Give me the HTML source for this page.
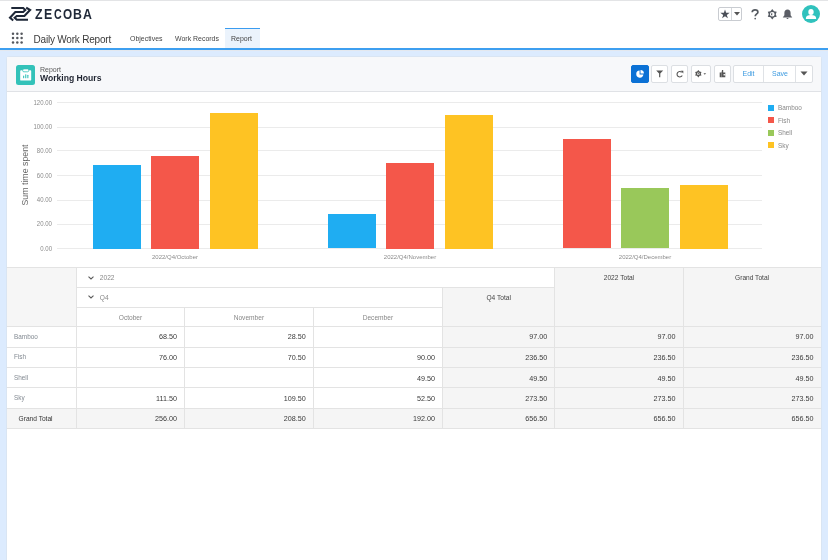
<!DOCTYPE html>
<html><head><meta charset="utf-8">
<style>
*{box-sizing:border-box;margin:0;padding:0}
html,body{width:828px;height:560px;overflow:hidden;background:#fff;font-family:"Liberation Sans",sans-serif}
.abs{position:absolute}
#topline{left:0;top:0;width:828px;height:1px;background:#e3e4e6}
.bl{top:6px;font-size:14px;font-weight:bold;color:#1f2838;transform:scaleX(0.88);transform-origin:0 0}
#apptitle{left:33.5px;top:34.2px;font-size:10px;letter-spacing:-0.2px;color:#3a3a3a}
.tab{top:34.4px;font-size:8px;color:#444;transform:scaleX(0.87);transform-origin:0 0}
#tabact{left:224.5px;top:28px;width:35px;height:20px;background:#ebf3fc;border-top:1.5px solid #3a9cf0}
#blueline{left:0;top:48px;width:828px;height:2px;background:#3d9ff0}
#bg{left:0;top:50px;width:828px;height:510px;background:#dcebfe}
#bgline{left:0;top:50px;width:828px;height:1px;background:#e4e8ee}
#card{left:6px;top:56px;width:815.5px;height:520px;background:#fff;border:1px solid #d9e5f3;border-radius:3px}
#cardhead{left:7px;top:57px;width:813.5px;height:35px;background:#f7f8fa;border-bottom:1px solid #e0e2e6}
#ricon{left:15.7px;top:65px;width:19.5px;height:20px;background:#33c2b9;border-radius:2.5px}
#rsmall{left:40px;top:66px;font-size:7px;color:#5a5a5a}
#rbig{left:40px;top:72.5px;font-size:8.6px;font-weight:bold;color:#1f2430}
.btn{top:65px;height:18px;border:1px solid #dcdfe3;border-radius:2px;background:#fff}
.ylab{font-size:6.5px;color:#8c8c8c;text-align:right;width:30px;margin-top:-0.3px;transform:scaleX(0.93);transform-origin:100% 0}
.grid{left:57px;width:705px;height:1px;background:#ebebeb}
.bar{position:absolute}
.xlab{font-size:6px;color:#8c8c8c;text-align:center;width:120px;margin-top:1.2px}
.leg{left:768px;width:6px;height:6px}
.legt{left:778px;font-size:6.4px;color:#888;margin-top:0.6px}
.cell{position:absolute;font-size:6.6px;color:#333}
</style></head><body><div id="root" style="position:absolute;left:0;top:0;width:828px;height:560px;will-change:transform">
<div id="topline" class="abs"></div>

<!-- logo -->
<svg class="abs" style="left:0;top:0" width="40" height="25" viewBox="0 0 40 25">
  <g fill="none" stroke="#1f2838" stroke-width="2.1" stroke-linejoin="miter" stroke-linecap="butt" stroke-miterlimit="10">
    <path d="M11.3 8 H23.2 L25.3 10 L23.2 12 H15.3 L10 17.7 L13.2 20.5"/>
    <path d="M26.2 7.7 L30.1 10 L24.4 16 H16.8 L14.7 17.8 L16.8 19.7 H28"/>
  </g>
</svg>
<div class="abs bl" style="left:35px">Z</div><div class="abs bl" style="left:44px">E</div><div class="abs bl" style="left:54px;transform:scaleX(0.76)">C</div><div class="abs bl" style="left:63px;transform:scaleX(0.84)">O</div><div class="abs bl" style="left:73px">B</div><div class="abs bl" style="left:83.4px">A</div>

<!-- top right icons -->
<div class="abs" style="left:718px;top:7px;width:24px;height:14px;border:1px solid #c9ccd1;border-radius:2px;background:#fff"></div>
<div class="abs" style="left:731px;top:8px;width:1px;height:12px;background:#d5d8dc"></div>
<svg class="abs" style="left:719.5px;top:9px" width="10" height="10" viewBox="0 0 24 24"><path fill="#4b4f58" d="M12 1l2.7 8.1h8.5l-6.9 5 2.7 8.1L12 17.2l-7 5 2.7-8.1-6.9-5h8.5z"/></svg>
<svg class="abs" style="left:733.5px;top:12px" width="6" height="4" viewBox="0 0 6 4"><path fill="#555" d="M0 0h6L3 3.5z"/></svg>
<svg class="abs" style="left:751px;top:9px" width="8" height="11" viewBox="0 0 8 11"><path fill="none" stroke="#555a60" stroke-width="1.7" d="M1.2 3.2C1.2 1.8 2.4 0.9 4 0.9S6.9 1.9 6.9 3.2C6.9 4.9 4.2 5 4.2 7.3"/><circle cx="4.2" cy="9.6" r="0.85" fill="#555a60"/></svg>
<svg class="abs" style="left:767px;top:9px" width="10.5" height="10.5" viewBox="0 0 24 24"><path fill="#555a62" fill-rule="evenodd" d="M12.00 0.20 L16.00 5.07 L22.22 6.10 L20.00 12.00 L22.22 17.90 L16.00 18.93 L12.00 23.80 L8.00 18.93 L1.78 17.90 L4.00 12.00 L1.78 6.10 L8.00 5.07Z M12 6.6A5.4 5.4 0 1 0 12 17.4A5.4 5.4 0 1 0 12 6.6Z"/><path fill="#555a62" d="M12 9.2A2.8 2.8 0 1 0 12 14.8z"/></svg>
<svg class="abs" style="left:782px;top:8.7px" width="11" height="11" viewBox="0 0 24 24"><path fill="#5b5e66" d="M12 1.2c-4.4 0-6.8 3.2-6.8 7.4v5.2L1.6 18.6h20.8l-3.6-4.8V8.6c0-4.2-2.4-7.4-6.8-7.4z"/><path fill="#5b5e66" d="M9.8 19.5h4.4a2.2 2.2 0 0 1-4.4 0z"/></svg>
<div class="abs" style="left:802px;top:5px;width:18px;height:18px;border-radius:50%;background:#30c2bd"></div>
<svg class="abs" style="left:802px;top:5px" width="18" height="18" viewBox="0 0 18 18"><ellipse cx="9" cy="7" rx="2.7" ry="3" fill="#fff"/><path d="M3.9 14.1V12.9C3.9 11.1 6 9.9 9 9.9S14.1 11.1 14.1 12.9V14.1Z" fill="#fff"/></svg>

<!-- nav -->
<svg class="abs" style="left:11px;top:32px" width="13" height="13" viewBox="0 0 13 13"><g fill="#55585e">
<circle cx="2" cy="1.7" r="1.25"/><circle cx="6.3" cy="1.7" r="1.25"/><circle cx="10.6" cy="1.7" r="1.25"/>
<circle cx="2" cy="6.1" r="1.25"/><circle cx="6.3" cy="6.1" r="1.25"/><circle cx="10.6" cy="6.1" r="1.25"/>
<circle cx="2" cy="10.5" r="1.25"/><circle cx="6.3" cy="10.5" r="1.25"/><circle cx="10.6" cy="10.5" r="1.25"/></g></svg>
<div id="apptitle" class="abs">Daily Work Report</div>
<div id="tabact" class="abs"></div>
<div class="abs tab" style="left:130px">Objectives</div>
<div class="abs tab" style="left:175px">Work Records</div>
<div class="abs tab" style="left:231px">Report</div>
<div id="bg" class="abs"></div>
<div id="bgline" class="abs"></div>
<div id="blueline" class="abs"></div>

<!-- card -->
<div id="card" class="abs"></div>
<div id="cardhead" class="abs"></div>
<div id="ricon" class="abs"></div>
<svg class="abs" style="left:15.7px;top:65px" width="20" height="20" viewBox="0 0 20 20">
 <rect x="4.2" y="5.2" width="11" height="10.4" rx="0.9" fill="#fff"/>
 <rect x="6.7" y="3.9" width="6" height="2.9" rx="1.2" fill="#fff" stroke="#33c2b9" stroke-width="0.8"/>
 <rect x="7.1" y="10.6" width="1.1" height="2.6" rx="0.5" fill="#33c2b9"/>
 <rect x="9.2" y="9.2" width="1.1" height="4" rx="0.5" fill="#33c2b9"/>
 <rect x="11.3" y="9.8" width="1.1" height="3.4" rx="0.5" fill="#33c2b9"/>
</svg>
<div id="rsmall" class="abs">Report</div>
<div id="rbig" class="abs">Working Hours</div>

<!-- toolbar -->
<div class="abs btn" style="left:631px;width:18px;height:17.5px;background:#0b71d5;border-color:#0b71d5"></div>
<div class="abs btn" style="left:651px;width:17px;height:17.5px"></div>
<div class="abs btn" style="left:670.5px;width:17.5px;height:17.5px"></div>
<div class="abs btn" style="left:690.5px;width:20.5px;height:17.5px"></div>
<div class="abs btn" style="left:714px;width:17px;height:17.5px"></div>
<svg class="abs" style="left:625px;top:60px" width="110" height="30" viewBox="625 60 110 30">
 <path fill="#fff" d="M639.6 70.5A3.6 3.6 0 1 0 643.4 74.6H639.6z"/>
 <path fill="#fff" d="M640.5 70.0v3.6h3.4A3.5 3.5 0 0 0 640.5 70.0z"/>
 <path fill="#555" d="M656.2 70.4H663.2L660.3 73.6V77.2H659.1V73.6z"/>
 <path fill="none" stroke="#555" stroke-width="1.1" d="M681.6 72.3A2.7 2.7 0 1 0 682.2 75.4"/>
 <path fill="#555" d="M680.6 70.7h2.7v2.7z"/>
 <g transform="translate(694.6 70) scale(0.31)"><path fill="#555" fill-rule="evenodd" d="M12.00 0.20 L16.00 5.07 L22.22 6.10 L20.00 12.00 L22.22 17.90 L16.00 18.93 L12.00 23.80 L8.00 18.93 L1.78 17.90 L4.00 12.00 L1.78 6.10 L8.00 5.07Z M12 7.8A4.2 4.2 0 1 0 12 16.2A4.2 4.2 0 1 0 12 7.8Z"/><circle cx="12" cy="12" r="2.2" fill="#555"/></g><path fill="#555" d="M703.5 73.2h2.6l-1.3 1.5z"/>
 <path fill="#555" d="M719.7 77.2V72.5h1.9l.4-2.5h1.2v2.5h2.1v4.7z"/><rect x="721.3" y="72.6" width="0.35" height="4.6" fill="#ccc"/><rect x="723.5" y="74.1" width="1.9" height="1.3" fill="#fff"/>
</svg>
<div class="abs btn" style="left:733px;width:80px"></div>
<div class="abs" style="left:763px;top:66px;width:1px;height:16px;background:#dfe2e6"></div>
<div class="abs" style="left:795px;top:66px;width:1px;height:16px;background:#dfe2e6"></div>
<div class="abs" style="left:742.5px;top:69.5px;font-size:7px;color:#3d9be0">Edit</div>
<div class="abs" style="left:772px;top:69.5px;font-size:7px;color:#3d9be0">Save</div>
<svg class="abs" style="left:800px;top:71px" width="8" height="5" viewBox="0 0 8 5"><path fill="#555" d="M0.5 0.5h7L4 4.5z"/></svg>

<!-- chart -->
<div class="abs grid" style="top:102px"></div>
<div class="abs grid" style="top:127px"></div>
<div class="abs grid" style="top:150px"></div>
<div class="abs grid" style="top:175px"></div>
<div class="abs grid" style="top:200px"></div>
<div class="abs grid" style="top:224px"></div>
<div class="abs grid" style="top:248px"></div>
<div class="abs ylab" style="left:22px;top:98.8px">120.00</div>
<div class="abs ylab" style="left:22px;top:122.8px">100.00</div>
<div class="abs ylab" style="left:22px;top:147.3px">80.00</div>
<div class="abs ylab" style="left:22px;top:171.8px">60.00</div>
<div class="abs ylab" style="left:22px;top:195.8px">40.00</div>
<div class="abs ylab" style="left:22px;top:220.3px">20.00</div>
<div class="abs ylab" style="left:22px;top:244.8px">0.00</div>
<div class="abs" style="left:24.6px;top:174.5px;width:0;height:0"><div style="position:absolute;transform:translate(-50%,-50%) rotate(-90deg);font-size:8.8px;color:#666;white-space:nowrap;line-height:1">Sum time spent</div></div>

<div class="bar" style="left:93px;top:165px;width:47.5px;height:83.5px;background:#1fadf2"></div>
<div class="bar" style="left:151.3px;top:155.5px;width:47.5px;height:93px;background:#f4574a"></div>
<div class="bar" style="left:210px;top:112.5px;width:47.5px;height:136px;background:#fec323"></div>

<div class="bar" style="left:328px;top:213.7px;width:47.5px;height:34.7px;background:#1fadf2"></div>
<div class="bar" style="left:386.3px;top:162.5px;width:47.5px;height:86px;background:#f4574a"></div>
<div class="bar" style="left:445px;top:115px;width:47.5px;height:133.5px;background:#fec323"></div>

<div class="bar" style="left:563px;top:138.8px;width:47.5px;height:109.6px;background:#f4574a"></div>
<div class="bar" style="left:621.3px;top:188.1px;width:47.5px;height:60.3px;background:#99c85a"></div>
<div class="bar" style="left:680px;top:184.5px;width:47.5px;height:64px;background:#fec323"></div>

<div class="abs xlab" style="left:115px;top:253px">2022/Q4/October</div>
<div class="abs xlab" style="left:350px;top:253px">2022/Q4/November</div>
<div class="abs xlab" style="left:585px;top:253px">2022/Q4/December</div>

<div class="abs leg" style="top:104.5px;background:#1fadf2"></div>
<div class="abs leg" style="top:117px;background:#f4574a"></div>
<div class="abs leg" style="top:129.5px;background:#99c85a"></div>
<div class="abs leg" style="top:142px;background:#fec323"></div>
<div class="abs legt" style="top:103.5px">Bamboo</div>
<div class="abs legt" style="top:116px">Fish</div>
<div class="abs legt" style="top:128.5px">Shell</div>
<div class="abs legt" style="top:141px">Sky</div>

<!-- table -->
<div id="table"><div class="abs" style="left:7px;top:267px;width:69.5px;height:59.5px;background:#f6f6f6"></div>
<div class="abs" style="left:442.5px;top:287.4px;width:112.3px;height:39.1px;background:#f5f5f5"></div>
<div class="abs" style="left:554.8px;top:267px;width:266.2px;height:59.5px;background:#f5f5f5"></div>
<div class="abs" style="left:442.5px;top:326.5px;width:378.5px;height:81.7px;background:#f5f5f5"></div>
<div class="abs" style="left:7px;top:408.2px;width:814px;height:20.2px;background:#f5f5f5"></div>
<div class="abs" style="left:7px;top:266.5px;width:814px;height:1px;background:#e3e3e3"></div>
<div class="abs" style="left:76.5px;top:286.9px;width:478.3px;height:1px;background:#e3e3e3"></div>
<div class="abs" style="left:76.5px;top:306.8px;width:366.0px;height:1px;background:#e3e3e3"></div>
<div class="abs" style="left:7px;top:325.5px;width:814px;height:1.5px;background:#e3e3e3"></div>
<div class="abs" style="left:7px;top:346.6px;width:814px;height:1px;background:#e3e3e3"></div>
<div class="abs" style="left:7px;top:367.2px;width:814px;height:1px;background:#e3e3e3"></div>
<div class="abs" style="left:7px;top:387.4px;width:814px;height:1px;background:#e3e3e3"></div>
<div class="abs" style="left:7px;top:407.7px;width:814px;height:1px;background:#e3e3e3"></div>
<div class="abs" style="left:7px;top:427.9px;width:814px;height:1px;background:#e3e3e3"></div>
<div class="abs" style="left:76.0px;top:267px;width:1px;height:161.4px;background:#e3e3e3"></div>
<div class="abs" style="left:184.0px;top:307.3px;width:1px;height:121.1px;background:#e3e3e3"></div>
<div class="abs" style="left:312.8px;top:307.3px;width:1px;height:121.1px;background:#e3e3e3"></div>
<div class="abs" style="left:442.0px;top:287.4px;width:1px;height:141.0px;background:#e3e3e3"></div>
<div class="abs" style="left:554.3px;top:267px;width:1px;height:161.4px;background:#e3e3e3"></div>
<div class="abs" style="left:682.6px;top:267px;width:1px;height:161.4px;background:#e3e3e3"></div>
<svg class="abs" style="left:87.8px;top:276px" width="6" height="4" viewBox="0 0 6 4"><path d="M0.5 0.6L3 3L5.5 0.6" fill="none" stroke="#5a5a5a" stroke-width="1.05"/></svg>
<svg class="abs" style="left:87.8px;top:295.4px" width="6" height="4" viewBox="0 0 6 4"><path d="M0.5 0.6L3 3L5.5 0.6" fill="none" stroke="#5a5a5a" stroke-width="1.05"/></svg>
<div class="abs tt" style="left:99.8px;top:273.5px;color:#888;font-size:6.6px;font-weight:normal">2022</div>
<div class="abs tt" style="left:99.8px;top:293.5px;color:#888;font-size:6.6px;font-weight:normal">Q4</div>
<div class="abs tt" style="left:70.5px;top:313.5px;width:120px;text-align:center;color:#888;font-size:6.6px;font-weight:normal">October</div>
<div class="abs tt" style="left:188.9px;top:313.5px;width:120px;text-align:center;color:#888;font-size:6.6px;font-weight:normal">November</div>
<div class="abs tt" style="left:317.9px;top:313.5px;width:120px;text-align:center;color:#888;font-size:6.6px;font-weight:normal">December</div>
<div class="abs tt" style="left:438.65px;top:293.5px;width:120px;text-align:center;color:#444;font-size:6.6px;font-weight:normal">Q4 Total</div>
<div class="abs tt" style="left:558.95px;top:273.5px;width:120px;text-align:center;color:#444;font-size:6.6px;font-weight:normal">2022 Total</div>
<div class="abs tt" style="left:692.05px;top:273.5px;width:120px;text-align:center;color:#444;font-size:6.6px;font-weight:normal">Grand Total</div>
<div class="abs tt" style="left:14px;top:332.8px;color:#838a92;font-size:6.4px;font-weight:normal">Bamboo</div>
<div class="abs tt" style="left:76.9px;top:332.40000000000003px;width:100px;text-align:right;color:#3a3a3a;font-size:7.2px;font-weight:normal">68.50</div>
<div class="abs tt" style="left:205.7px;top:332.40000000000003px;width:100px;text-align:right;color:#3a3a3a;font-size:7.2px;font-weight:normal">28.50</div>
<div class="abs tt" style="left:447.19999999999993px;top:332.40000000000003px;width:100px;text-align:right;color:#3a3a3a;font-size:7.2px;font-weight:normal">97.00</div>
<div class="abs tt" style="left:575.5px;top:332.40000000000003px;width:100px;text-align:right;color:#3a3a3a;font-size:7.2px;font-weight:normal">97.00</div>
<div class="abs tt" style="left:713.4px;top:332.40000000000003px;width:100px;text-align:right;color:#3a3a3a;font-size:7.2px;font-weight:normal">97.00</div>
<div class="abs tt" style="left:14px;top:353.40000000000003px;color:#838a92;font-size:6.4px;font-weight:normal">Fish</div>
<div class="abs tt" style="left:76.9px;top:353.00000000000006px;width:100px;text-align:right;color:#3a3a3a;font-size:7.2px;font-weight:normal">76.00</div>
<div class="abs tt" style="left:205.7px;top:353.00000000000006px;width:100px;text-align:right;color:#3a3a3a;font-size:7.2px;font-weight:normal">70.50</div>
<div class="abs tt" style="left:334.9px;top:353.00000000000006px;width:100px;text-align:right;color:#3a3a3a;font-size:7.2px;font-weight:normal">90.00</div>
<div class="abs tt" style="left:447.19999999999993px;top:353.00000000000006px;width:100px;text-align:right;color:#3a3a3a;font-size:7.2px;font-weight:normal">236.50</div>
<div class="abs tt" style="left:575.5px;top:353.00000000000006px;width:100px;text-align:right;color:#3a3a3a;font-size:7.2px;font-weight:normal">236.50</div>
<div class="abs tt" style="left:713.4px;top:353.00000000000006px;width:100px;text-align:right;color:#3a3a3a;font-size:7.2px;font-weight:normal">236.50</div>
<div class="abs tt" style="left:14px;top:374.0px;color:#838a92;font-size:6.4px;font-weight:normal">Shell</div>
<div class="abs tt" style="left:334.9px;top:373.6px;width:100px;text-align:right;color:#3a3a3a;font-size:7.2px;font-weight:normal">49.50</div>
<div class="abs tt" style="left:447.19999999999993px;top:373.6px;width:100px;text-align:right;color:#3a3a3a;font-size:7.2px;font-weight:normal">49.50</div>
<div class="abs tt" style="left:575.5px;top:373.6px;width:100px;text-align:right;color:#3a3a3a;font-size:7.2px;font-weight:normal">49.50</div>
<div class="abs tt" style="left:713.4px;top:373.6px;width:100px;text-align:right;color:#3a3a3a;font-size:7.2px;font-weight:normal">49.50</div>
<div class="abs tt" style="left:14px;top:394.2px;color:#838a92;font-size:6.4px;font-weight:normal">Sky</div>
<div class="abs tt" style="left:76.9px;top:393.8px;width:100px;text-align:right;color:#3a3a3a;font-size:7.2px;font-weight:normal">111.50</div>
<div class="abs tt" style="left:205.7px;top:393.8px;width:100px;text-align:right;color:#3a3a3a;font-size:7.2px;font-weight:normal">109.50</div>
<div class="abs tt" style="left:334.9px;top:393.8px;width:100px;text-align:right;color:#3a3a3a;font-size:7.2px;font-weight:normal">52.50</div>
<div class="abs tt" style="left:447.19999999999993px;top:393.8px;width:100px;text-align:right;color:#3a3a3a;font-size:7.2px;font-weight:normal">273.50</div>
<div class="abs tt" style="left:575.5px;top:393.8px;width:100px;text-align:right;color:#3a3a3a;font-size:7.2px;font-weight:normal">273.50</div>
<div class="abs tt" style="left:713.4px;top:393.8px;width:100px;text-align:right;color:#3a3a3a;font-size:7.2px;font-weight:normal">273.50</div>
<div class="abs tt" style="left:18.6px;top:414.5px;color:#333;font-size:6.6px;font-weight:normal">Grand Total</div>
<div class="abs tt" style="left:76.9px;top:414.1px;width:100px;text-align:right;color:#3a3a3a;font-size:7.2px;font-weight:normal">256.00</div>
<div class="abs tt" style="left:205.7px;top:414.1px;width:100px;text-align:right;color:#3a3a3a;font-size:7.2px;font-weight:normal">208.50</div>
<div class="abs tt" style="left:334.9px;top:414.1px;width:100px;text-align:right;color:#3a3a3a;font-size:7.2px;font-weight:normal">192.00</div>
<div class="abs tt" style="left:447.19999999999993px;top:414.1px;width:100px;text-align:right;color:#3a3a3a;font-size:7.2px;font-weight:normal">656.50</div>
<div class="abs tt" style="left:575.5px;top:414.1px;width:100px;text-align:right;color:#3a3a3a;font-size:7.2px;font-weight:normal">656.50</div>
<div class="abs tt" style="left:713.4px;top:414.1px;width:100px;text-align:right;color:#3a3a3a;font-size:7.2px;font-weight:normal">656.50</div></div><!--endtable-->
</div></body></html>
